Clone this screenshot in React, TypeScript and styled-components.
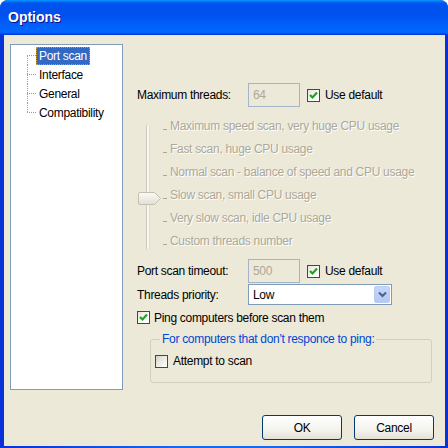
import React from "react";
import styled, { createGlobalStyle } from "styled-components";

const GlobalStyle = createGlobalStyle`
  html, body {
    margin: 0;
    padding: 0;
    background: #ffffff;
  }
  body {
    font-family: "Liberation Sans", Arial, sans-serif;
    font-size: 12px;
    letter-spacing: -0.3px;
    color: #000;
  }
`;

const Window = styled.div`
  width: 448px;
  height: 448px;
  display: flex;
  flex-direction: column;
  background: #0841d9;
  border-radius: 8px 8px 0 0;
  overflow: hidden;
`;

const TitleBar = styled.div`
  flex: none;
  height: 34px;
  display: flex;
  align-items: center;
  padding: 0 0 1px 8px;
  background: linear-gradient(
    to bottom,
    #0997ff 0%,
    #0053ee 9%,
    #0050ee 40%,
    #0066ff 86%,
    #0066ff 92%,
    #005bff 95%,
    #003dd7 97%,
    #003dd7 100%
  );
  color: #fff;
  font-weight: bold;
  font-size: 14px;
  letter-spacing: 0;
  text-shadow: 1px 1px 0 #0f1089;
`;

const Frame = styled.div`
  flex: 1;
  display: flex;
  padding: 0 3px 3px 4px;
  background: linear-gradient(to right, #0831d9, #166aee 40%, #166aee 60%, #0831d9);
`;

const Client = styled.div`
  flex: 1;
  display: flex;
  flex-direction: column;
  background: #ece9d8;
  padding: 9px 11px 6px 6px;
`;

const MainRow = styled.div`
  display: flex;
  height: 346px;
`;

const Tree = styled.ul`
  width: 111px;
  margin: 0;
  padding: 1px 0 0;
  list-style: none;
  background: #fff;
  border: 1px solid #7f9db9;
`;

const TreeRow = styled.li<{ $first?: boolean; $last?: boolean }>`
  position: relative;
  height: 19px;
  padding-left: 25px;
  display: flex;
  align-items: center;

  &::before {
    content: "";
    position: absolute;
    left: 16px;
    width: 9px;
    top: 9px;
    border-top: 1px dotted #9a9a9a;
  }

  &::after {
    content: "";
    position: absolute;
    left: 16px;
    top: ${(p) => (p.$first ? "9px" : "0")};
    bottom: ${(p) => (p.$last ? "10px" : "0")};
    border-left: 1px dotted #9a9a9a;
  }
`;

const TreeLabel = styled.span<{ $selected?: boolean }>`
  height: 18px;
  line-height: 16px;
  padding: 0 2px;
  box-sizing: border-box;
  border: 1px dotted ${(p) => (p.$selected ? "#c89d3c" : "transparent")};
  background: ${(p) => (p.$selected ? "#316ac5" : "transparent")};
  color: ${(p) => (p.$selected ? "#fff" : "#000")};
  white-space: nowrap;
`;

const Panel = styled.div`
  flex: 1;
  display: flex;
  flex-direction: column;
  padding-left: 14px;
`;

const FieldRow = styled.div<{ $top: number; $height: number }>`
  display: flex;
  align-items: center;
  margin-top: ${(p) => p.$top}px;
  height: ${(p) => p.$height}px;
`;

const FieldLabel = styled.span`
  width: 111px;
  flex: none;
  white-space: nowrap;
`;

const NumberBox = styled.div`
  width: 52px;
  height: 24px;
  box-sizing: border-box;
  border: 1px solid #a5b5c9;
  padding-left: 4px;
  display: flex;
  align-items: center;
  color: #aca899;
`;

const CheckRow = styled.label<{ $gap?: number; $left?: number }>`
  display: flex;
  align-items: center;
  gap: ${(p) => p.$gap ?? 5}px;
  margin-left: ${(p) => p.$left ?? 0}px;
  height: 14px;
  white-space: nowrap;
`;

const Box = styled.span<{ $checked?: boolean }>`
  width: 13px;
  height: 13px;
  box-sizing: border-box;
  border: 1px solid #1c5180;
  background: ${(p) =>
    p.$checked
      ? "linear-gradient(135deg, #e4e4dc, #ffffff 70%)"
      : "linear-gradient(135deg, #cfcfc4 0%, #e8e8e0 40%, #ffffff 100%)"};
  display: flex;
  align-items: center;
  justify-content: center;
  flex: none;
`;

const SliderArea = styled.div`
  display: flex;
  margin-top: 7px;
`;

const Trackbar = styled.div`
  position: relative;
  width: 26px;
  flex: none;
`;

const Track = styled.div`
  margin: 10px 0 0 9px;
  width: 2px;
  height: 126px;
  background: #f7f6f1;
  border-left: 1px solid #cdc9bb;
  border-right: 1px solid #dedbcf;
  border-radius: 2px;
`;

const Thumb = styled.svg`
  position: absolute;
  left: 1px;
  top: 78px;
`;

const Levels = styled.ul`
  margin: 0;
  padding: 0;
  list-style: none;
`;

const Level = styled.li`
  height: 23px;
  display: flex;
  align-items: center;
  color: #aca899;
  text-shadow: 1px 1px 0 #ffffff;
  white-space: nowrap;

  &::before {
    content: "";
    width: 4px;
    height: 1px;
    margin: 8px 3px 0 0;
    background: #aca899;
  }
`;

const Select = styled.div`
  width: 144px;
  height: 21px;
  box-sizing: border-box;
  border: 1px solid #7f9db9;
  background: #fff;
  display: flex;
  align-items: center;
  justify-content: space-between;
  padding: 1px 1px 1px 4px;
`;

const DropButton = styled.span`
  width: 16px;
  height: 17px;
  border-radius: 2px;
  background: linear-gradient(to bottom, #c6d6fb, #b4c8f6);
  border: 1px solid #bccdf3;
  box-sizing: border-box;
  display: flex;
  align-items: center;
  justify-content: center;
`;

const GroupBox = styled.fieldset`
  margin: 8px 2px 0 13px;
  padding: 8px 0 14px 4px;
  border: 1px solid #d0d0bf;
  border-radius: 3px;
  min-width: 0;
`;

const Caption = styled.legend`
  margin-left: 5px;
  padding: 0 2px;
  color: #0046d5;
  line-height: 14px;
`;

const Footer = styled.div`
  display: flex;
  justify-content: flex-end;
  gap: 12px;
  margin-top: 25px;
`;

const Button = styled.button`
  width: 80px;
  height: 25px;
  border: 1px solid #003c74;
  border-radius: 3px;
  background: linear-gradient(to bottom, #ffffff 0%, #f4f3ee 60%, #e3e1d5 100%);
  font-family: "Liberation Sans", Arial, sans-serif;
  font-size: 12px;
  letter-spacing: -0.3px;
  color: #000;
  padding: 0;
`;

const Check = () => (
  <svg width="9" height="9" viewBox="0 0 9 9">
    <polyline points="1,4 3.5,6.5 8,1.5" fill="none" stroke="#21a121" strokeWidth="2.2" />
  </svg>
);

const levels = [
  "Maximum speed scan, very huge CPU usage",
  "Fast scan, huge CPU usage",
  "Normal scan - balance of speed and CPU usage",
  "Slow scan, small CPU usage",
  "Very slow scan, idle CPU usage",
  "Custom threads number",
];

const pages = ["Port scan", "Interface", "General", "Compatibility"];

export default function App() {
  return (
    <>
      <GlobalStyle />
      <Window>
        <TitleBar>Options</TitleBar>
        <Frame>
          <Client>
            <MainRow>
              <Tree>
                {pages.map((p, i) => (
                  <TreeRow key={p} $first={i === 0} $last={i === pages.length - 1}>
                    <TreeLabel $selected={i === 0}>{p}</TreeLabel>
                  </TreeRow>
                ))}
              </Tree>
              <Panel>
                <FieldRow $top={39} $height={24}>
                  <FieldLabel>Maximum threads:</FieldLabel>
                  <NumberBox>64</NumberBox>
                  <CheckRow $left={7}>
                    <Box $checked>
                      <Check />
                    </Box>
                    Use default
                  </CheckRow>
                </FieldRow>

                <SliderArea>
                  <Trackbar>
                    <Track />
                    <Thumb width="24" height="13" viewBox="0 0 24 13">
                      <defs>
                        <linearGradient id="thumbFill" x1="0" y1="0" x2="0" y2="1">
                          <stop offset="0" stopColor="#fbfbf8" />
                          <stop offset="1" stopColor="#e2dfd2" />
                        </linearGradient>
                      </defs>
                      <path
                        d="M0.5 2 Q0.5 0.5 2 0.5 H16.5 L22.5 6.5 L16.5 12.5 H2 Q0.5 12.5 0.5 11 Z"
                        fill="url(#thumbFill)"
                        stroke="#c3c0b2"
                      />
                    </Thumb>
                  </Trackbar>
                  <Levels>
                    {levels.map((l) => (
                      <Level key={l}>{l}</Level>
                    ))}
                  </Levels>
                </SliderArea>

                <FieldRow $top={7} $height={24}>
                  <FieldLabel>Port scan timeout:</FieldLabel>
                  <NumberBox>500</NumberBox>
                  <CheckRow $left={7}>
                    <Box $checked>
                      <Check />
                    </Box>
                    Use default
                  </CheckRow>
                </FieldRow>

                <FieldRow $top={1} $height={21}>
                  <FieldLabel>Threads priority:</FieldLabel>
                  <Select>
                    Low
                    <DropButton>
                      <svg width="9" height="7" viewBox="0 0 9 7">
                        <polyline points="1,1.5 4.5,5 8,1.5" fill="none" stroke="#4d6185" strokeWidth="2" />
                      </svg>
                    </DropButton>
                  </Select>
                </FieldRow>

                <FieldRow $top={6} $height={13}>
                  <CheckRow $gap={4}>
                    <Box $checked>
                      <Check />
                    </Box>
                    Ping computers before scan them
                  </CheckRow>
                </FieldRow>

                <GroupBox>
                  <Caption>For computers that don't responce to ping:</Caption>
                  <CheckRow>
                    <Box />
                    Attempt to scan
                  </CheckRow>
                </GroupBox>
              </Panel>
            </MainRow>
            <Footer>
              <Button>OK</Button>
              <Button>Cancel</Button>
            </Footer>
          </Client>
        </Frame>
      </Window>
    </>
  );
}
